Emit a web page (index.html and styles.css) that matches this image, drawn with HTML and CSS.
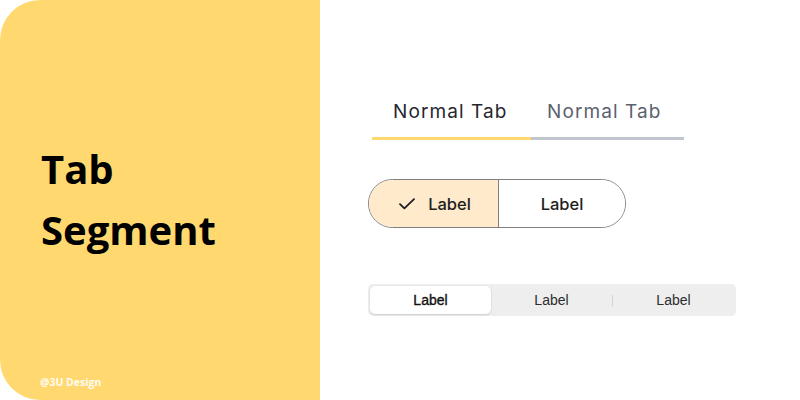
FILE: index.html
```html
<!DOCTYPE html>
<html lang="en">
<head>
<meta charset="utf-8">
<title>Tab Segment</title>
<link rel="stylesheet" href="styles.css">
</head>
<body>
<div class="card">
  <aside class="hero">
    <h1 class="hero-title">Tab<br>Segment</h1>
    <div class="hero-credit">@3U Design</div>
  </aside>
  <main class="demo">
    <div class="tabs">
      <div class="tab tab-active">Normal Tab</div>
      <div class="tab tab-idle">Normal Tab</div>
    </div>
    <div class="pill">
      <div class="pill-item pill-selected">
        <svg class="check" width="16" height="12" viewBox="0 0 16 12"><path d="M1 6.2 L5.4 10.4 L15 1.2" fill="none" stroke="#1e1e22" stroke-width="1.8" stroke-linecap="round" stroke-linejoin="round"/></svg>
        <span>Label</span>
      </div>
      <div class="pill-item"><span>Label</span></div>
    </div>
    <div class="seg">
      <div class="seg-item seg-selected">Label</div>
      <div class="seg-item">Label</div>
      <div class="seg-sep"></div>
      <div class="seg-item">Label</div>
    </div>
  </main>
</div>
</body>
</html>
```
FILE: styles.css
```css
* { box-sizing: border-box; }
html, body { margin: 0; padding: 0; background: #ffffff; }
.card {
  width: 800px;
  height: 400px;
  display: flex;
  border-radius: 40px;
  overflow: hidden;
  background: #ffffff;
}
.hero {
  width: 320px;
  flex: none;
  background: #FFD970;
  display: flex;
  flex-direction: column;
  padding: 0 0 0 41px;
  font-family: "Open Sans", "Noto Sans", sans-serif;
}
.hero-title {
  margin: 138px 0 0 0;
  font-size: 40px;
  line-height: 61px;
  font-weight: 700;
  color: #000000;
}
.hero-credit {
  margin-top: auto;
  margin-bottom: 10px;
  margin-left: -1px;
  font-size: 10.5px;
  line-height: 16px;
  font-weight: 700;
  color: rgba(255,255,255,0.92);
}
.demo {
  flex: 1;
  display: flex;
  flex-direction: column;
  align-items: flex-start;
  padding: 98px 0 0 48px;
}
.tabs {
  display: flex;
  margin-left: 4px;
}
.tab {
  font-family: "Inter", "Liberation Sans", sans-serif;
  font-size: 19px;
  line-height: 28px;
  letter-spacing: 1.1px;
  padding-bottom: 11px;
  border-bottom: 3px solid #C0C6CF;
  white-space: nowrap;
}
.tab-active {
  width: 159px;
  padding-left: 21px;
  color: #24272e;
  border-bottom-color: #FFD970;
}
.tab-idle {
  width: 153px;
  padding-left: 16px;
  color: #5a626e;
}
.pill {
  margin-top: 39px;
  display: flex;
  width: 258px;
  height: 49px;
  border: 1px solid #808080;
  border-radius: 25px;
  overflow: hidden;
  font-family: "Inter", sans-serif;
  font-weight: 500;
  font-size: 16.5px;
  color: #1e1e22;
}
.pill-item {
  flex: 1;
  display: flex;
  align-items: center;
  justify-content: center;
  gap: 13px;
  background: #ffffff;
}
.pill-selected {
  background: #FFEACC;
  border-right: 1px solid #808080;
  padding-left: 3px;
}
.check { display: block; margin-top: 1px; }
.seg {
  margin-top: 56px;
  width: 368px;
  height: 32px;
  padding: 2px;
  display: flex;
  align-items: center;
  background: #EEEEEE;
  border-radius: 5px;
  font-family: "Liberation Sans", "Arial", sans-serif;
  font-size: 14px;
  color: #2c2c2c;
}
.seg-item {
  flex: 1;
  height: 28px;
  line-height: 28px;
  text-align: center;
}
.seg-selected {
  background: #ffffff;
  border-radius: 5px;
  box-shadow: 0 1px 2px rgba(0,0,0,0.12), 0 0 0 0.5px rgba(0,0,0,0.04);
  color: #111111;
  -webkit-text-stroke: 0.35px #111111;
}
.seg-sep {
  width: 1px;
  height: 11px;
  background: #d2d2d2;
  flex: none;
}
```
